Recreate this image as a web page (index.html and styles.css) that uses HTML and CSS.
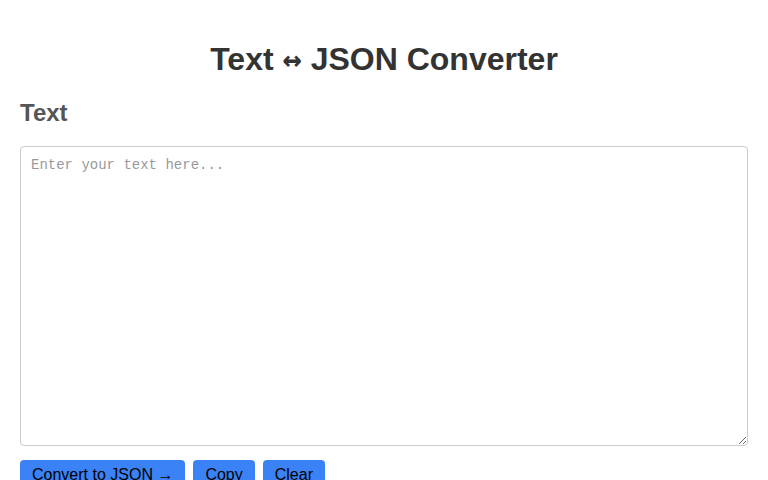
FILE: index.html
```html
<!DOCTYPE html>
<html lang="en">
<head>
<meta charset="utf-8">
<title>Text ↔ JSON Converter</title>
<link rel="stylesheet" href="styles.css">
</head>
<body>
<h1 class="title">Text <span class="arrow">↔</span> JSON Converter</h1>
<section class="panel">
  <h2 class="panel-title">Text</h2>
  <textarea class="input" placeholder="Enter your text here..."></textarea>
  <div class="actions">
    <button class="btn">Convert to JSON →</button>
    <button class="btn">Copy</button>
    <button class="btn">Clear</button>
  </div>
</section>
</body>
</html>
```

FILE: styles.css
```css
html, body {
  margin: 0;
  background: #fff;
}
body {
  padding: 20px;
  font-family: "Liberation Sans", Arial, sans-serif;
  color: #333;
}
.title {
  font-size: 32px;
  font-weight: bold;
  text-align: center;
  color: #333;
  margin: 20px 0 21px;
}
.arrow {
  font-family: "DejaVu Sans Mono", monospace;
}
.panel-title {
  font-size: 24px;
  font-weight: bold;
  color: #555;
  margin: 0 0 19px;
}
.input {
  display: block;
  box-sizing: border-box;
  width: 100%;
  height: 300px;
  padding: 10px;
  border: 1px solid #ccc;
  border-radius: 4px;
  font-family: "Liberation Mono", "Courier New", monospace;
  font-size: 14px;
  color: #333;
  resize: vertical;
}
.input::placeholder {
  color: #999;
}
.actions {
  display: flex;
  gap: 8px;
  margin-top: 14px;
}
.btn {
  font-family: "Liberation Sans", Arial, sans-serif;
  font-size: 16px;
  color: #000;
  background: #3b82f6;
  border: none;
  border-radius: 4px;
  padding: 6px 12px;
  cursor: pointer;
}
```
